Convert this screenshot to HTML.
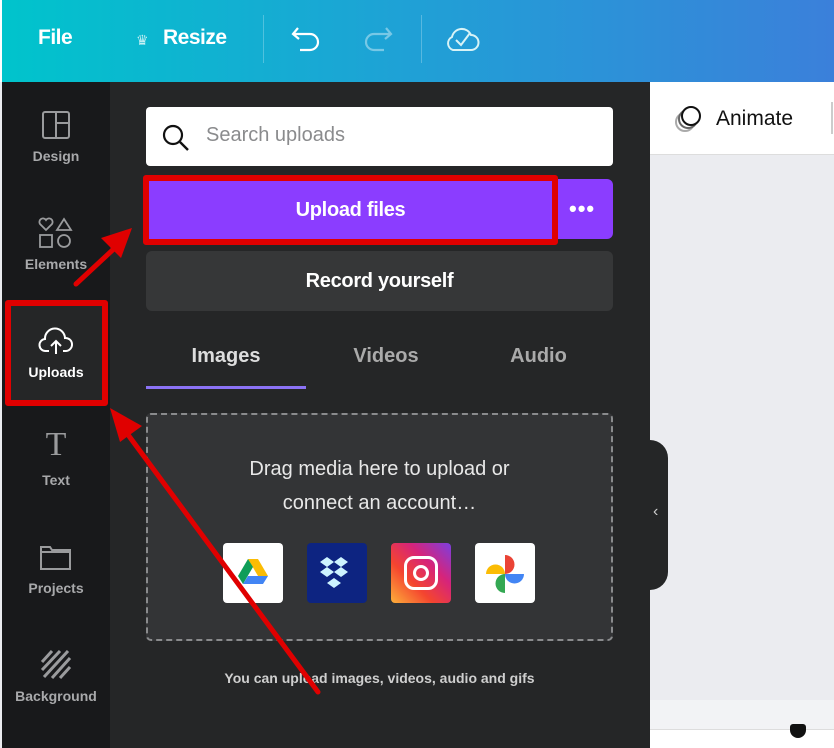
<!DOCTYPE html>
<html><head><style>
*{margin:0;padding:0;box-sizing:border-box}
body{width:834px;height:748px;overflow:hidden;position:relative;font-family:"Liberation Sans",sans-serif;background:#ebecf0}
.a{position:absolute}
.top{left:0;top:0;width:834px;height:82px;background:linear-gradient(90deg,#00c4cc,#20a0d6 50%,#3b80da);border-left:2px solid #fff}
.tt{color:#fff;font-weight:bold;font-size:21px;top:26px;letter-spacing:-0.5px}
.side{left:2px;top:82px;width:108px;height:666px;background:#18191b}
.panel{left:110px;top:82px;width:540px;height:666px;background:#252627}
.si{width:108px;left:2px;text-align:center;color:#a8a9ab;font-size:14px;font-weight:bold}
.right{left:650px;top:82px;width:184px;height:73px;background:#fff;border-bottom:1px solid #ddd}
</style></head><body>
<div class="a top"></div>
<div class="a tt" style="left:38px">File</div>
<div class="a tt" style="left:163px">Resize</div>
<div class="a" style="left:136px;top:32px;color:#c8f0f4;font-size:14px">♛</div>
<div class="a" style="left:263px;top:15px;width:1px;height:48px;background:rgba(255,255,255,.25)"></div>
<div class="a" style="left:421px;top:15px;width:1px;height:48px;background:rgba(255,255,255,.25)"></div>
<svg class="a" style="left:290px;top:24px" width="36" height="30" viewBox="0 0 36 30"><path d="M8 4 L3 10 L9 15 M3 10 H20 a8 8 0 0 1 0 16 H10" fill="none" stroke="#fff" stroke-width="2.2"/></svg>
<svg class="a" style="left:358px;top:24px" width="36" height="30" viewBox="0 0 36 30"><path d="M28 4 L33 10 L27 15 M33 10 H16 a8 8 0 0 0 0 16 H26" fill="none" stroke="rgba(255,255,255,.4)" stroke-width="2.2"/></svg>
<svg class="a" style="left:444px;top:22px" width="36" height="32" viewBox="0 0 36 32"><path d="M9 28 a7 7 0 0 1 -1 -13 a10 10 0 0 1 19 -2 a7 7 0 0 1 0 15 Z" fill="none" stroke="#d8f3f6" stroke-width="2"/><path d="M12 18 l5 5 l9 -12" fill="none" stroke="#d8f3f6" stroke-width="2"/></svg>

<div class="a side"></div>
<div class="a panel"></div>
<div class="a right"></div>
<div class="a" style="left:650px;top:700px;width:184px;height:30px;background:#f2f3f5;border-bottom:1px solid #ddd"></div>
<div class="a" style="left:650px;top:730px;width:184px;height:18px;background:#fff"></div>
<div class="a" style="left:790px;top:724px;width:16px;height:14px;background:#111;border-radius:3px 3px 8px 8px"></div>
<svg class="a" style="left:670px;top:102px" width="34" height="34"><circle cx="15" cy="20" r="9" fill="none" stroke="#aaa" stroke-width="2"/><circle cx="18" cy="17" r="9" fill="#fff" stroke="#666" stroke-width="2"/><circle cx="21" cy="14" r="9" fill="#fff" stroke="#111" stroke-width="2"/></svg>
<div class="a" style="left:716px;top:107px;font-size:21px;color:#111">Animate</div>
<div class="a" style="left:831px;top:102px;width:2px;height:32px;background:#ccc"></div>
<div class="a" style="left:650px;top:440px;width:18px;height:150px;background:#252627;border-radius:0 18px 18px 0"></div>
<div class="a" style="left:653px;top:503px;color:#ccc;font-size:16px">‹</div>

<svg class="a" style="left:41px;top:110px" width="30" height="30"><rect x="2" y="2" width="26" height="26" rx="2" fill="none" stroke="#9a9b9d" stroke-width="2"/><path d="M15 2V28M15 13H28" stroke="#9a9b9d" stroke-width="2"/></svg>
<div class="a si" style="top:148px">Design</div>
<svg class="a" style="left:38px;top:217px" width="36" height="32"><path d="M8 13 L2 7 a3 3 0 0 1 6 -4 a3 3 0 0 1 6 4 Z" fill="none" stroke="#9a9b9d" stroke-width="1.8"/><path d="M26 2 L33 13 H19 Z" fill="none" stroke="#9a9b9d" stroke-width="1.8"/><rect x="2" y="18" width="12" height="12" fill="none" stroke="#9a9b9d" stroke-width="1.8"/><circle cx="26" cy="24" r="6" fill="none" stroke="#9a9b9d" stroke-width="1.8"/></svg>
<div class="a si" style="top:256px">Elements</div>
<div class="a" style="left:5px;top:300px;width:103px;height:106px;background:#252627;border:6px solid #e00000;border-radius:3px"></div>
<svg class="a" style="left:38px;top:327px" width="36" height="28"><path d="M11 24 H8 a6 6 0 0 1 -1 -12 a10 10 0 0 1 20 -1 a6 6 0 0 1 1 13 H25" fill="none" stroke="#fff" stroke-width="2"/><path d="M18 27 V14 M13 19 l5 -5 l5 5" fill="none" stroke="#fff" stroke-width="2"/></svg>
<div class="a si" style="top:364px;color:#fff">Uploads</div>
<div class="a" style="left:40px;top:428px;width:32px;text-align:center;color:#9a9b9d;font-size:34px;font-family:'Liberation Serif',serif;line-height:1">T</div>
<div class="a si" style="top:472px">Text</div>
<svg class="a" style="left:39px;top:543px" width="34" height="28"><path d="M2 4 H11 l2 3 H31 V26 H2 Z M2 9 H31" fill="none" stroke="#9a9b9d" stroke-width="2"/></svg>
<div class="a si" style="top:580px">Projects</div>
<svg class="a" style="left:40px;top:650px" width="32" height="30"><path d="M2 12 L12 1 M2 20 L20 1 M4 27 L28 1 M12 28 L30 8 M20 28 L30 17" stroke="#9a9b9d" stroke-width="3"/></svg>
<div class="a si" style="top:688px">Background</div>

<div class="a" style="left:146px;top:107px;width:467px;height:59px;background:#fff;border-radius:4px"></div>
<svg class="a" style="left:160px;top:122px" width="32" height="32"><circle cx="13" cy="13" r="9" fill="none" stroke="#111" stroke-width="2.2"/><path d="M20 20 L28 28" stroke="#111" stroke-width="2.4"/></svg>
<div class="a" style="left:206px;top:124px;font-size:20px;color:#8a8b8d">Search uploads</div>
<div class="a" style="left:557px;top:179px;width:56px;height:60px;background:#8b3dff;border-radius:0 6px 6px 0"></div>
<div class="a" style="left:569px;top:204px;color:#fff;font-size:22px;letter-spacing:1px;line-height:10px;font-weight:bold">•••</div>
<div class="a" style="left:143px;top:175px;width:415px;height:70px;background:#8b3dff;border:6px solid #e00000;border-radius:3px;color:#fff;font-weight:bold;font-size:20px;text-align:center;line-height:58px;letter-spacing:-0.3px">Upload files</div>
<div class="a" style="left:146px;top:251px;width:467px;height:60px;background:#363738;border-radius:6px;color:#fff;font-weight:bold;font-size:20px;text-align:center;line-height:60px;letter-spacing:-0.3px">Record yourself</div>
<div class="a" style="left:146px;top:345px;width:160px;text-align:center;color:#ddd;font-weight:bold;font-size:20px">Images</div>
<div class="a" style="left:306px;top:345px;width:160px;text-align:center;color:#aaa;font-weight:bold;font-size:20px">Videos</div>
<div class="a" style="left:466px;top:345px;width:145px;text-align:center;color:#aaa;font-weight:bold;font-size:20px">Audio</div>
<div class="a" style="left:146px;top:386px;width:160px;height:3px;background:#8b72f5"></div>
<div class="a" style="left:146px;top:413px;width:467px;height:228px;background:#333436;border:2px dashed #8a8b8d;border-radius:5px"></div>
<div class="a" style="left:146px;top:452px;width:467px;text-align:center;color:#e8e8e8;font-size:20px;line-height:34px">Drag media here to upload or<br>connect an account…</div>
<div class="a" style="left:223px;top:543px;width:60px;height:60px;background:#fff;border-radius:4px"></div>
<svg class="a" style="left:237px;top:557px" width="32" height="30"><path d="M11 2 H21 L31 19 H21 Z" fill="#fbbc04"/><path d="M11 2 L1 19 L6 27 L16 10 Z" fill="#0f9d58"/><path d="M6 27 H26 L31 19 H11 Z" fill="#4285f4"/></svg>
<div class="a" style="left:307px;top:543px;width:60px;height:60px;background:#0d2481;border-radius:4px"></div>
<svg class="a" style="left:317px;top:556px" width="40" height="36"><g fill="#cdf3ff"><path d="M10 1 l7 5 l-7 5 l-7 -5Z M24 1 l7 5 l-7 5 l-7 -5Z M10 11 l7 5 l-7 5 l-7 -5Z M24 11 l7 5 l-7 5 l-7 -5Z M17 22 l7 5 l-7 5 l-7 -5Z"/></g></svg>
<div class="a" style="left:391px;top:543px;width:60px;height:60px;border-radius:4px;background:linear-gradient(45deg,#fdb03a,#f4452f 35%,#d6247a 65%,#7b3fe0)"></div>
<div class="a" style="left:404px;top:556px;width:34px;height:34px;border:3.5px solid #fff;border-radius:10px"></div>
<div class="a" style="left:413px;top:565px;width:16px;height:16px;border:3.5px solid #fff;border-radius:50%"></div>
<div class="a" style="left:475px;top:543px;width:60px;height:60px;background:#fff;border-radius:4px"></div>
<svg class="a" style="left:484px;top:551px" width="42" height="46" viewBox="0 0 42 46"><path d="M21 23 V4 a9 9 0 0 1 0 19Z" fill="#ea4335"/><path d="M21 23 H40 a9 9 0 0 1 -19 0Z" fill="#4285f4"/><path d="M21 23 V42 a9 9 0 0 1 0 -19Z" fill="#34a853"/><path d="M21 23 H2 a9 9 0 0 1 19 0Z" fill="#fbbc04"/></svg>
<div class="a" style="left:146px;top:670px;width:467px;text-align:center;color:#cfcfcf;font-size:14px;font-weight:bold">You can upload images, videos, audio and gifs</div>

<svg class="a" style="left:0;top:0" width="834" height="748">
<path d="M318 692 L126 432" stroke="#e00000" stroke-width="5" stroke-linecap="round"/>
<path d="M110 408 L142 426 L120 442 Z" fill="#e00000"/>
<path d="M76 284 L118 245" stroke="#e00000" stroke-width="5" stroke-linecap="round"/>
<path d="M132 228 L121 258 L101 238 Z" fill="#e00000"/>
</svg>
</body></html>
